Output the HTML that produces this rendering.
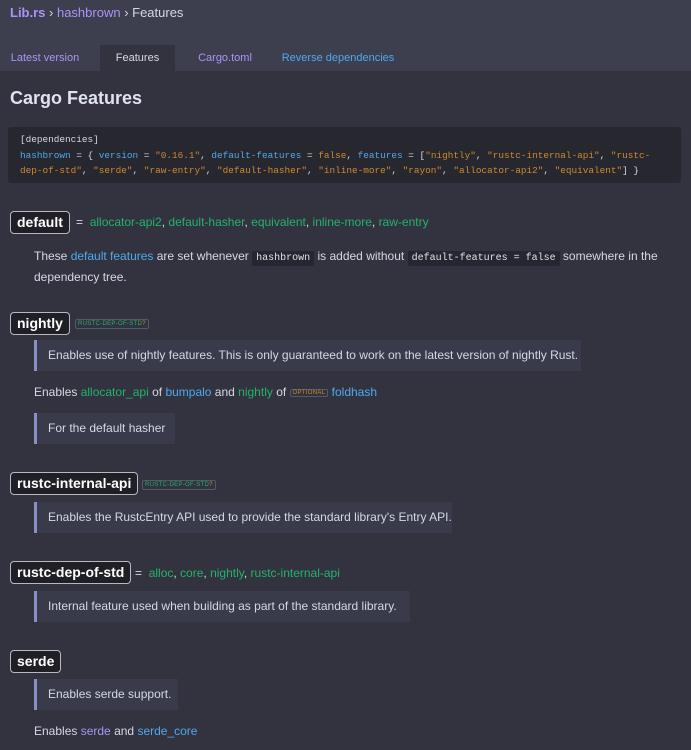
<!DOCTYPE html>
<html><head><meta charset="utf-8"><style>
*{margin:0;padding:0;box-sizing:border-box}
body{width:691px;height:750px;overflow:hidden;background:#32333f;font-family:"Liberation Sans",sans-serif;color:#d6d8e6;position:relative}
.a{position:absolute;white-space:nowrap}
.hdr{position:absolute;left:0;top:0;width:691px;height:71px;background:#3d3e4e}
.tab{position:absolute;top:45px;height:26px;line-height:26px;font-size:11px;text-align:center}
.p{color:#a995f5}.b{color:#4ea9ef}.g{color:#22b36a}.o{color:#d0892e}
.badge{position:absolute;left:10px;height:23px;line-height:20px;border:1.5px solid #b8b8c2;border-radius:4px;background:#1f1f25;color:#fff;font-weight:bold;font-size:14px;padding:0 6px}
.tag{position:absolute;font-size:6px;line-height:8px;border:1px solid #555866;border-radius:2px;padding:0 2px;letter-spacing:.3px}
.bq{position:absolute;left:34px;height:31px;background:#393a4a;border-left:3px solid #8b90c4;font-size:12px;line-height:31px;padding-left:11px;color:#d6d8e6}
.t{font-size:12px}
code{font-family:"Liberation Mono",monospace;font-size:10px;background:#262630;padding:2px 4px;border-radius:2px;color:#e0e0e8}
.code{position:absolute;left:8px;top:127px;width:673px;height:56px;background:#26272f;border-radius:3px;font-family:"Liberation Mono",monospace;font-size:9.4px;line-height:15.5px;padding:5px 12px;white-space:pre;color:#d6d8e6;overflow:hidden}
</style></head><body>
<div class="hdr"></div>
<div class="a" style="left:10px;top:5px;font-size:13px;line-height:16px"><b class="p">Lib.rs</b> › <span class="p">hashbrown</span> › Features</div>
<div class="tab p" style="left:0;width:90px">Latest version</div>
<div class="tab" style="left:100px;width:75px;background:#32333f">Features</div>
<div class="tab p" style="left:185px;width:80px">Cargo.toml</div>
<div class="tab b" style="left:278px;width:120px">Reverse dependencies</div>
<div class="a" style="left:10px;top:88px;font-size:18px;font-weight:bold;color:#dfe2f0">Cargo Features</div>
<div class="code">[dependencies]
<span class="b">hashbrown</span> = { <span class="b">version</span> = <span class="o">"0.16.1"</span>, <span class="b">default-features</span> = <span class="o">false</span>, <span class="b">features</span> = [<span class="o">"nightly"</span>, <span class="o">"rustc-internal-api"</span>, <span class="o">"rustc-</span>
<span class="o">dep-of-std"</span>, <span class="o">"serde"</span>, <span class="o">"raw-entry"</span>, <span class="o">"default-hasher"</span>, <span class="o">"inline-more"</span>, <span class="o">"rayon"</span>, <span class="o">"allocator-api2"</span>, <span class="o">"equivalent"</span>] }</div>

<div class="badge" style="top:211px">default</div>
<div class="a t" style="left:76px;top:215px"> = &nbsp;<span class="g">allocator-api2</span>, <span class="g">default-hasher</span>, <span class="g">equivalent</span>, <span class="g">inline-more</span>, <span class="g">raw-entry</span></div>
<div class="a t" style="left:34px;top:247px;line-height:18px">These <span class="b">default features</span> are set whenever <code>hashbrown</code> is added without <code>default-features = false</code> somewhere in the<br>dependency tree.</div>

<div class="badge" style="top:312px">nightly</div>
<div class="tag g" style="left:75px;top:319px">RUSTC-DEP-OF-STD<span class="o">?</span></div>
<div class="bq" style="top:340px;width:547px">Enables use of nightly features. This is only guaranteed to work on the latest version of nightly Rust.</div>
<div class="a t" style="left:34px;top:385px">Enables <span class="g">allocator_api</span> of <span class="b">bumpalo</span> and <span class="g">nightly</span> of <span class="tag o" style="position:relative;top:-2px">OPTIONAL</span> <span class="b">foldhash</span></div>
<div class="bq" style="top:413px;width:141px">For the default hasher</div>

<div class="badge" style="top:472px">rustc-internal-api</div>
<div class="tag g" style="left:142px;top:480px">RUSTC-DEP-OF-STD<span class="o">?</span></div>
<div class="bq" style="top:502px;width:418px">Enables the RustcEntry API used to provide the standard library's Entry API.</div>

<div class="badge" style="top:561px">rustc-dep-of-std</div>
<div class="a t" style="left:135px;top:566px"> = &nbsp;<span class="g">alloc</span>, <span class="g">core</span>, <span class="g">nightly</span>, <span class="g">rustc-internal-api</span></div>
<div class="bq" style="top:591px;width:376px">Internal feature used when building as part of the standard library.</div>

<div class="badge" style="top:650px">serde</div>
<div class="bq" style="top:679px;width:144px">Enables serde support.</div>
<div class="a t" style="left:34px;top:724px">Enables <span class="p">serde</span> and <span class="b">serde_core</span></div>
</body></html>
